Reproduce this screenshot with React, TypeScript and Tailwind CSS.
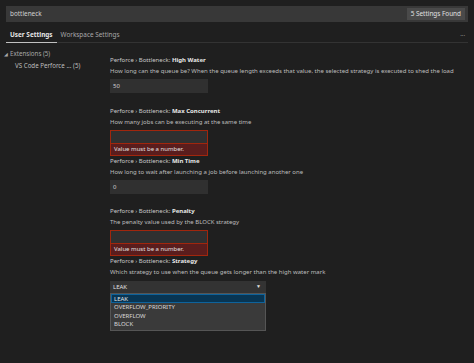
import React from "react";

const font = { fontFamily: '"Noto Sans", "Open Sans", sans-serif' };

function Title({ name }: { name: string }) {
  return (
    <div className="h-[11px] leading-[11px] text-[#c8c8c8] whitespace-nowrap">
      Perforce › Bottleneck: <span className="font-bold text-[#e8e8e8]">{name}</span>
    </div>
  );
}

function Desc({ text }: { text: string }) {
  return <div className="h-[11px] leading-[11px] text-[#bdbdbd] whitespace-nowrap">{text}</div>;
}

function NumInput({ value }: { value: string }) {
  return (
    <div className="mt-[2px] w-[98px] h-[14px] bg-[#303030] text-[#cfcfcf] pl-[3px] leading-[14px]">{value}</div>
  );
}

function ErrInput() {
  return (
    <div className="mt-[2px] w-[98px]">
      <div className="h-[14px] bg-[#303030] border border-[#a1260d]" />
      <div className="h-[12px] bg-[#5a1d1d] border border-[#a1260d] border-t-0 text-[#e0e0e0] pl-[3px] leading-[11px]">
        Value must be a number.
      </div>
    </div>
  );
}

export default function App() {
  return (
    <div className="w-[474px] h-[363px] bg-[#1f1f1f] overflow-hidden text-[6px]" style={font}>
      <div className="pt-[6px] px-[6px]">
        <div className="h-[16px] bg-[#383838] flex items-center justify-between pl-[4px] pr-[3px] text-[6.4px]">
          <span className="text-[#d0d0d0]">bottleneck</span>
          <span className="bg-[#4a4a4a] text-[#e0e0e0] px-[4px] h-[12px] leading-[12px]">5 Settings Found</span>
        </div>
      </div>
      <div className="mx-[6px] mt-[5px] h-[16px] border-b border-[#333] flex items-end justify-between text-[6.4px]">
        <div className="flex items-end h-full">
          <div className="h-full flex items-center px-[4px] border-b border-[#c0c0c0] text-[#e6e6e6] font-bold -mb-[1px]">User Settings</div>
          <div className="h-full flex items-center px-[4px] text-[#a8a8a8]">Workspace Settings</div>
        </div>
        <div className="h-full flex items-center pr-[3px] text-[#b0b0b0] text-[6px]">...</div>
      </div>
      <div className="flex">
        <div className="w-[104px] pl-[4px] pt-[5px] text-[#a8a8a8] shrink-0 text-[6.2px]">
          <div className="h-[12px] leading-[12px] flex items-center">
            <span className="text-[5px] mr-[2px]">◢</span>Extensions (5)
          </div>
          <div className="h-[12px] leading-[12px] pl-[11px] text-[#bdbdbd]">VS Code Perforce ... (5)</div>
        </div>
        <div className="pl-[6px] pt-[12px]">
          <Title name="High Water" />
          <Desc text="How long can the queue be? When the queue length exceeds that value, the selected strategy is executed to shed the load" />
          <NumInput value="50" />

          <div className="mt-[13px]" />
          <Title name="Max Concurrent" />
          <Desc text="How many jobs can be executing at the same time" />
          <ErrInput />

          <Title name="Min Time" />
          <Desc text="How long to wait after launching a job before launching another one" />
          <NumInput value="0" />

          <div className="mt-[12px]" />
          <Title name="Penalty" />
          <Desc text="The penalty value used by the BLOCK strategy" />
          <ErrInput />

          <Title name="Strategy" />
          <Desc text="Which strategy to use when the queue gets longer than the high water mark" />
          <div className="mt-[3px] w-[156px]">
            <div className="h-[12px] bg-[#333] flex items-center justify-between pl-[3px] pr-[5px] text-[#e0e0e0]">
              <span>LEAK</span>
              <span className="text-[5px]">▼</span>
            </div>
            <div className="bg-[#3a3a3a] border border-[#555] pb-[1px] text-[#d8d8d8]">
              <div className="h-[9px] leading-[8px] bg-[#083553] border border-[#0e639c] pl-[2px] text-[#e6e6e6]">LEAK</div>
              <div className="h-[8.5px] leading-[8.5px] pl-[3px]">OVERFLOW_PRIORITY</div>
              <div className="h-[8.5px] leading-[8.5px] pl-[3px]">OVERFLOW</div>
              <div className="h-[8.5px] leading-[8.5px] pl-[3px]">BLOCK</div>
            </div>
          </div>
        </div>
      </div>
    </div>
  );
}
